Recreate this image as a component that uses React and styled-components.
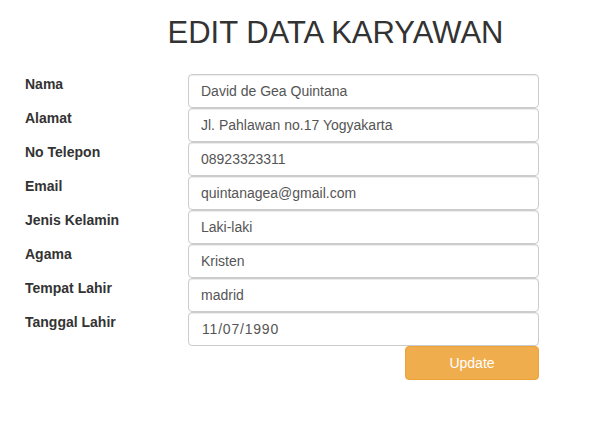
import React from "react";
import styled, { createGlobalStyle } from "styled-components";

const GlobalStyle = createGlobalStyle`
  html, body {
    margin: 0;
    padding: 0;
    background: #fff;
    font-family: "Liberation Sans", Arial, Helvetica, sans-serif;
    font-size: 14px;
    line-height: 20px;
    color: #333;
  }
`;

const Page = styled.div`
  width: 593px;
  height: 425px;
  box-sizing: border-box;
  padding-top: 16px;
`;

const Title = styled.h1`
  margin: 0 0 24px 78px;
  font-size: 31px;
  line-height: 34px;
  font-weight: 400;
  text-align: center;
  color: #333;
`;

const Form = styled.form`
  display: grid;
  grid-template-columns: 163px 351px;
  padding-left: 25px;
`;

const Label = styled.label`
  font-weight: 700;
  height: 34px;
  line-height: 20px;
  color: #333;
`;

const Input = styled.input`
  display: block;
  box-sizing: border-box;
  width: 100%;
  height: 34px;
  padding: 6px 12px;
  font-family: inherit;
  font-size: 14px;
  line-height: 20px;
  color: #555;
  letter-spacing: ${({ $spaced }) => ($spaced ? "0.8px" : "normal")};
  text-indent: ${({ $spaced }) => ($spaced ? "1px" : "0")};
  background: #fff;
  border: 1px solid #ccc;
  border-radius: 4px;
  box-shadow: inset 0 1px 1px rgba(0, 0, 0, 0.075);
  outline: none;
`;

const Actions = styled.div`
  grid-column: 2;
  display: flex;
  justify-content: flex-end;
`;

const Button = styled.button`
  width: 134px;
  height: 34px;
  padding: 6px 12px;
  font-family: inherit;
  font-size: 14px;
  line-height: 20px;
  color: #fff;
  background: #f0ad4e;
  border: 1px solid #eea236;
  border-radius: 4px;
  cursor: pointer;
`;

const fields = [
  { id: "nama", label: "Nama", value: "David de Gea Quintana" },
  { id: "alamat", label: "Alamat", value: "Jl. Pahlawan no.17 Yogyakarta" },
  { id: "telepon", label: "No Telepon", value: "08923323311" },
  { id: "email", label: "Email", value: "quintanagea@gmail.com" },
  { id: "jk", label: "Jenis Kelamin", value: "Laki-laki" },
  { id: "agama", label: "Agama", value: "Kristen" },
  { id: "tempat", label: "Tempat Lahir", value: "madrid" },
  { id: "tanggal", label: "Tanggal Lahir", value: "11/07/1990", spaced: true },
];

const App = () => {
  return (
    <>
      <GlobalStyle />
      <Page>
        <Title>EDIT DATA KARYAWAN</Title>
        <Form onSubmit={(e) => e.preventDefault()}>
          {fields.map((f) => (
            <React.Fragment key={f.id}>
              <Label htmlFor={f.id}>{f.label}</Label>
              <Input id={f.id} defaultValue={f.value} $spaced={f.spaced} />
            </React.Fragment>
          ))}
          <Actions>
            <Button type="submit">Update</Button>
          </Actions>
        </Form>
      </Page>
    </>
  );
};

export default App;
